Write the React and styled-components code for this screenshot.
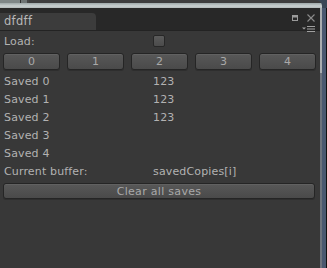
import React from "react";
import styled, { createGlobalStyle } from "styled-components";

const Global = createGlobalStyle`
  html, body { margin: 0; padding: 0; background: #3a4656; }
  * { box-sizing: border-box; }
`;

const Screen = styled.div`
  width: 327px;
  height: 268px;
  display: grid;
  grid-template-rows: 8px 1fr;
  overflow: hidden;
  font-family: "DejaVu Sans", "Liberation Sans", sans-serif;
  font-size: 11px;
  letter-spacing: 0.15px;
  color: #b2b2b2;
`;

const TopStrip = styled.div`
  background:
    linear-gradient(to bottom, transparent 0 3px, #9fa9aa 3px, #c9d0d0 6px, #b3baba 8px),
    linear-gradient(to right, #7f8787 0 20px, #2f2f2f 20px 21px, #6e7474 21px 27px, #444 27px 29px, #3e3e3e 29px);
  border-top-right-radius: 6px;
  margin-right: 5px;
`;

const Body = styled.div`
  display: flex;
  min-height: 0;
`;

const Window = styled.div`
  width: 320px;
  display: flex;
  flex-direction: column;
  background: #383838;
`;

const FrameEdge = styled.div`
  width: 2px;
  background: linear-gradient(to bottom, #a9adb0 0 65px, #6c727c 65px);
`;

const DesktopEdge = styled.div`
  flex: 1;
  background: linear-gradient(to right, #4a5870 0 4px, #111 4px);
`;

const Header = styled.div`
  height: 23px;
  background: #282828;
  display: flex;
  justify-content: space-between;
  align-items: flex-end;
  border-bottom: 1px solid #232323;
`;

const Tab = styled.div`
  width: 96px;
  height: 17px;
  background: #3c3c3c;
  border-top-right-radius: 4px;
  padding-left: 4px;
  line-height: 17px;
  font-size: 11.5px;
  letter-spacing: 0.3px;
  color: #b8b8b8;
`;

const IconArea = styled.div`
  align-self: stretch;
  display: grid;
  grid-template-rows: 13px 10px;
  justify-items: end;
  padding-right: 5px;
  padding-top: 3px;
`;

const IconRow = styled.div`
  display: flex;
  align-items: center;
  gap: 9px;
`;

const Content = styled.div`
  padding: 3px 4px 0 3px;
  display: flex;
  flex-direction: column;
`;

const FieldRow = styled.div`
  display: grid;
  grid-template-columns: 149px 1fr;
  align-items: center;
  height: ${(p) => p.$h || 18}px;
  padding-left: 1px;
`;

const Checkbox = styled.div`
  width: 12px;
  height: 12px;
  border-radius: 2px;
  border: 1px solid #272727;
  background: linear-gradient(to bottom, #5b5b5b, #4b4b4b);
`;

const ButtonRow = styled.div`
  margin-top: 5px;
  margin-bottom: 2px;
  display: grid;
  grid-template-columns: repeat(5, 57px);
  gap: 7px;
`;

const Button = styled.div`
  height: ${(p) => p.$h || 17}px;
  border-radius: 3px;
  border: 1px solid #252525;
  background: linear-gradient(to bottom, #585858, #4a4a4a);
  box-shadow: inset 0 1px 0 #616161, 0 1px 0 #2e2e2e;
  display: flex;
  align-items: center;
  justify-content: center;
  color: #a9a9a9;
  letter-spacing: ${(p) => (p.$wide ? "0.3px" : "0")};
`;

const ClearWrap = styled.div`
  margin-top: 3px;
  margin-right: 1px;
`;

const MaxIcon = () => (
  <svg width="6" height="6" viewBox="0 0 6 6">
    <rect x="0.5" y="0.5" width="5" height="5" fill="none" stroke="#9a9a9a" />
    <rect x="0.5" y="0.5" width="5" height="2" fill="#9a9a9a" />
  </svg>
);

const CloseIcon = () => (
  <svg width="8" height="8" viewBox="0 0 8 8">
    <path d="M0.5 0.5L7.5 7.5M7.5 0.5L0.5 7.5" stroke="#8c8c8c" strokeWidth="1.1" />
  </svg>
);

const MenuIcon = () => (
  <svg width="13" height="6" viewBox="0 0 13 6">
    <path d="M0 1.5H4L2 3.5Z" fill="#a0a0a0" />
    <rect x="5" y="0" width="8" height="1" fill="#a0a0a0" />
    <rect x="5" y="2.5" width="8" height="1" fill="#a0a0a0" />
    <rect x="5" y="5" width="8" height="1" fill="#a0a0a0" />
  </svg>
);

const saves = ["123", "123", "123", "", ""];

export default function App() {
  return (
    <>
      <Global />
      <Screen>
        <TopStrip />
        <Body>
          <Window>
            <Header>
              <Tab>dfdff</Tab>
              <IconArea>
                <IconRow>
                  <MaxIcon />
                  <CloseIcon />
                </IconRow>
                <IconRow>
                  <MenuIcon />
                </IconRow>
              </IconArea>
            </Header>
            <Content>
              <FieldRow $h={14}>
                <span>Load:</span>
                <Checkbox />
              </FieldRow>
              <ButtonRow>
                {[0, 1, 2, 3, 4].map((n) => (
                  <Button key={n}>{n}</Button>
                ))}
              </ButtonRow>
              {saves.map((v, i) => (
                <FieldRow key={i}>
                  <span>Saved {i}</span>
                  <span>{v}</span>
                </FieldRow>
              ))}
              <FieldRow>
                <span>Current buffer:</span>
                <span>savedCopies[i]</span>
              </FieldRow>
              <ClearWrap>
                <Button $h={16} $wide>Clear all saves</Button>
              </ClearWrap>
            </Content>
          </Window>
          <FrameEdge />
          <DesktopEdge />
        </Body>
      </Screen>
    </>
  );
}
